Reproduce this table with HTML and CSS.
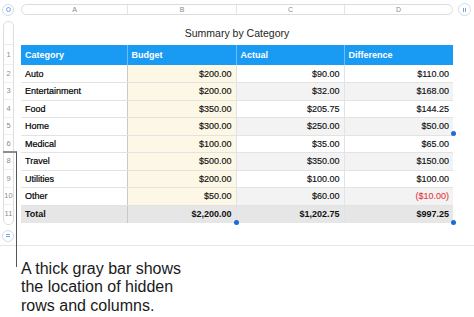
FILE: index.html
```html
<!DOCTYPE html>
<html>
<head>
<meta charset="utf-8">
<link rel="stylesheet" href="styles.css">
</head>
<body>
<div class="app">
  <div class="colbar">
    <div class="knob knob-ring"><span class="ring"></span></div>
    <div class="colheads">
      <span class="ch ch-a">A</span>
      <span class="ch ch-b">B</span>
      <span class="ch ch-c">C</span>
      <span class="ch ch-d">D</span>
    </div>
    <div class="knob knob-pause"><span class="bar"></span><span class="bar"></span></div>
  </div>

  <div class="sheet">
    <div class="rowheads">
      <div class="rh-spacer"></div>
      <div class="rh rh-head">1</div>
      <div class="rh">2</div>
      <div class="rh">3</div>
      <div class="rh">4</div>
      <div class="rh">5</div>
      <div class="rh">6</div>
      <div class="rh">8</div>
      <div class="rh">9</div>
      <div class="rh">10</div>
      <div class="rh rh-last">11</div>
    </div>
    <div class="tablewrap">
      <div class="title">Summary by Category</div>
      <table class="grid">
        <colgroup>
          <col class="w-a"><col class="w-b"><col class="w-c"><col class="w-d">
        </colgroup>
        <thead>
          <tr class="hrow">
            <th class="ca">Category</th><th>Budget</th><th>Actual</th><th>Difference</th>
          </tr>
        </thead>
        <tbody>
          <tr><td class="ca">Auto</td><td class="cb">$200.00</td><td>$90.00</td><td>$110.00</td></tr>
          <tr class="alt"><td class="ca">Entertainment</td><td class="cb">$200.00</td><td>$32.00</td><td>$168.00</td></tr>
          <tr><td class="ca">Food</td><td class="cb">$350.00</td><td>$205.75</td><td>$144.25</td></tr>
          <tr class="alt"><td class="ca">Home</td><td class="cb">$300.00</td><td>$250.00</td><td>$50.00</td></tr>
          <tr><td class="ca">Medical</td><td class="cb">$100.00</td><td>$35.00</td><td>$65.00</td></tr>
          <tr class="alt"><td class="ca">Travel</td><td class="cb">$500.00</td><td>$350.00</td><td>$150.00</td></tr>
          <tr><td class="ca">Utilities</td><td class="cb">$200.00</td><td>$100.00</td><td>$100.00</td></tr>
          <tr class="alt"><td class="ca">Other</td><td class="cb">$50.00</td><td>$60.00</td><td class="neg">($10.00)</td></tr>
          <tr class="total"><td class="ca">Total</td><td class="cb">$2,200.00</td><td>$1,202.75</td><td>$997.25</td></tr>
        </tbody>
      </table>
      <span class="dot dot-right"></span>
      <span class="dot dot-bottom"></span>
      <span class="dot dot-corner"></span>
    </div>
  </div>

  <div class="footer">
    <div class="knob knob-eq"><span class="hbar"></span><span class="hbar"></span></div>
  </div>
  <div class="divider"></div>
  <p class="caption">A thick gray bar shows<br>the location of hidden<br>rows and columns.</p>

  <div class="callout"></div>
</div>
</body>
</html>
```

FILE: styles.css
```css
* { box-sizing: border-box; }

html, body {
  margin: 0;
  padding: 0;
  background: #ffffff;
}

body {
  font-family: "Liberation Sans", Arial, sans-serif;
  color: #111;
}

.app {
  position: relative;
  width: 474px;
  height: 317px;
  overflow: hidden;
}

/* ---------- column header bar ---------- */
.colbar {
  display: flex;
  align-items: center;
  padding-top: 3px;
  height: 16px;
}

.knob {
  width: 12px;
  height: 12px;
  border: 1px solid #d3dbe6;
  border-radius: 50%;
  background: #fff;
  display: flex;
  align-items: center;
  justify-content: center;
  gap: 1px;
  flex: none;
}

.knob-ring { margin-left: 2px; }
.ring {
  width: 5px;
  height: 5px;
  border: 1px solid #6aa6ea;
  border-radius: 50%;
}

.knob-pause {
  margin-left: 5px;
  width: 13px;
  height: 13px;
}
.knob-pause .bar {
  width: 1px;
  height: 4px;
  background: #6aa6ea;
}

.colheads {
  margin-left: 7px;
  width: 432px;
  height: 11px;
  border: 1px solid #dcdcdc;
  border-radius: 6px;
  display: flex;
  background: #fff;
}

.ch {
  font-size: 7px;
  color: #8a8a8a;
  display: flex;
  align-items: center;
  justify-content: center;
  border-right: 1px solid #e4e4e4;
}
.ch-a { width: 106px; }
.ch-b { width: 109px; }
.ch-c { width: 108px; }
.ch-d { flex: 1; border-right: none; }

/* ---------- sheet ---------- */
.sheet {
  display: flex;
  margin-top: 5px;
}

.rowheads {
  margin-left: 3px;
  width: 11px;
  border: 1px solid #dedede;
  border-radius: 5px;
  display: flex;
  flex-direction: column;
  flex: none;
  align-self: flex-start;
  padding-bottom: 1px;
}

.rh-spacer { height: 23px; border-bottom: 1px solid #ececec; }

.rh {
  height: 17.5px;
  font-size: 7.5px;
  color: #8c8c8c;
  display: flex;
  align-items: center;
  justify-content: center;
  border-bottom: 1px solid #efefef;
}
.rh-head { height: 20px; }
.rh-last { border-bottom: none; }

.tablewrap {
  position: relative;
  margin-left: 7px;
  width: 432px;
}

.title {
  height: 24px;
  display: flex;
  align-items: center;
  justify-content: center;
  font-size: 10.5px;
  color: #1e1e1e;
}

.grid {
  border-collapse: collapse;
  table-layout: fixed;
  width: 432px;
  font-size: 9px;
}

.w-a { width: 106px; }
.w-b { width: 109px; }
.w-c { width: 108px; }
.w-d { width: 109px; }

.grid th {
  height: 20px;
  background: #1a9bf3;
  color: #fff;
  font-weight: bold;
  text-align: left;
  padding: 0 4px;
  border-left: 1px solid #6cc0f7;
}
.grid th.ca { border-left: none; }

.grid td {
  height: 17.5px;
  padding: 0 4px;
  text-align: right;
  color: #111;
  -webkit-text-stroke: 0.15px #111;
  border-bottom: 1px solid #e3e3e3;
  border-left: 1px solid #e3e3e3;
  white-space: nowrap;
}

.grid td.ca {
  text-align: left;
  background: #fff;
  border-left: none;
  color: #000;
  -webkit-text-stroke: 0.2px #000;
}

.grid td.cb {
  background: #fdf8e5;
  border-left: 1px solid #c9c9c9;
}

.grid tr.alt td { background: #f3f3f3; }
.grid tr.alt td.ca { background: #fff; }
.grid tr.alt td.cb { background: #fdf8e5; }

.grid td.neg { color: #e5363e; -webkit-text-stroke: 0.1px #e5363e; }

.grid tr.total td {
  background: #e6e6e6;
  font-weight: bold;
  color: #111;
  -webkit-text-stroke: 0;
  border-top: 1px solid #a9a9a9;
  border-bottom: none;
}

/* selection handles */
.dot {
  position: absolute;
  width: 5px;
  height: 5px;
  border-radius: 50%;
  background: #1f6ad4;
}
.dot-right { left: 430px; top: 110px; }
.dot-bottom { left: 213px; top: 199px; }
.dot-corner { left: 430px; top: 199px; }

/* ---------- footer ---------- */
.footer {
  display: flex;
  margin-top: 5px;
  height: 12px;
}

.knob-eq {
  margin-left: 2px;
  flex-direction: column;
  gap: 1px;
}
.knob-eq .hbar {
  width: 4px;
  height: 1px;
  background: #6aa6ea;
}

.divider {
  margin-top: 3px;
  height: 1px;
  background: #e6e6e6;
}

.caption {
  margin: 14px 0 0 21px;
  font-size: 16px;
  line-height: 18.5px;
  color: #1a1a1a;
}

/* callout line from the hidden-row bar down to the caption */
.callout {
  position: absolute;
  left: 3px;
  top: 151px;
  width: 14px;
  height: 116px;
  border-top: 2px solid #8d8d8d;
  border-right: 1.5px solid #555;
}
```
